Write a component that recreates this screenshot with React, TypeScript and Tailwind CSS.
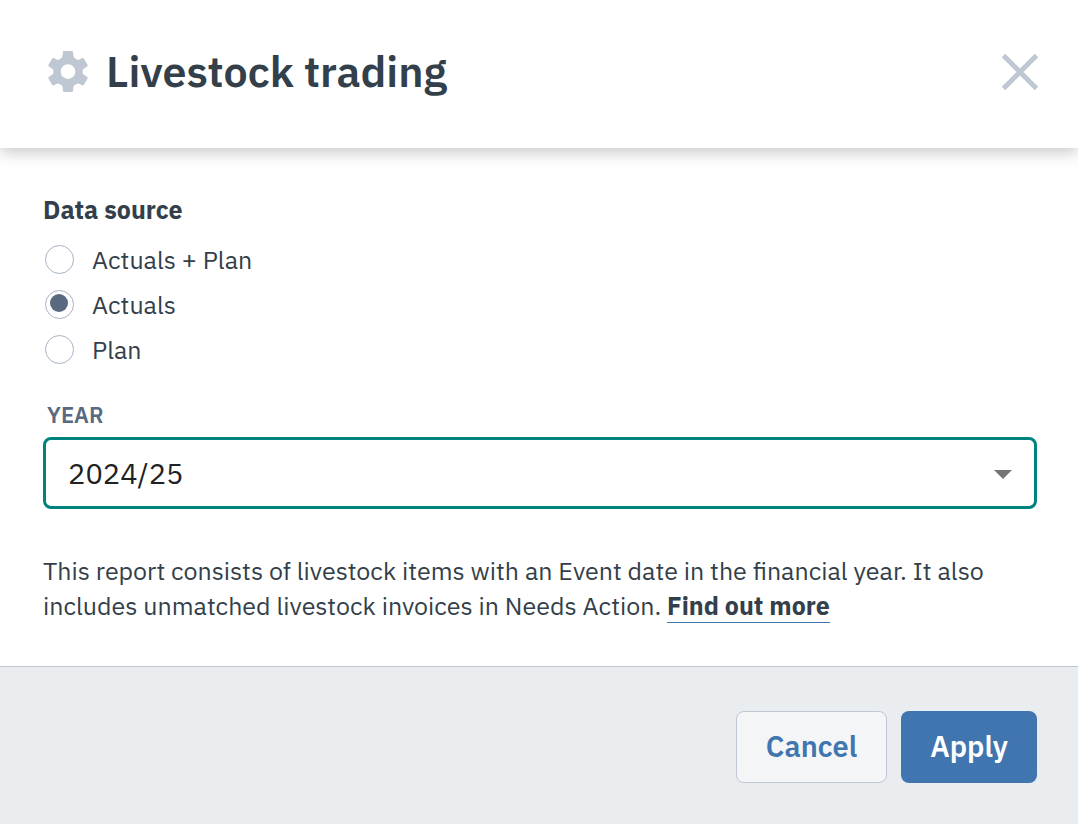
import { useState } from "react";

const sources = ["Actuals + Plan", "Actuals", "Plan"];

function GearIcon() {
  return (
    <svg viewBox="0 0 120 123" className="h-[41px] w-10 shrink-0" fill="#bfc7d3" aria-hidden="true">
      <path
        fillRule="evenodd"
        d="M48 0H72Q74 0 75 3L77 17Q77 20 80 21L88 26Q90 27 93 26L103 21Q106 20 108 23L119 42Q120 44 118 46L106 54Q104 56 104 58V66Q104 68 106 70L118 78Q120 80 119 82L108 101Q106 104 103 103L93 98Q90 96 88 98L80 102Q77 104 77 106L75 120Q74 123 72 123H48Q45 123 45 120L43 106Q43 104 40 102L32 98Q30 96 27 98L17 103Q14 104 12 101L1 82Q0 80 2 78L14 70Q16 68 16 66V58Q16 56 14 54L2 46Q0 44 1 42L12 23Q14 20 17 21L27 26Q30 27 32 26L40 21Q43 20 43 17L45 3Q45 0 48 0ZM60 40A22 22 0 1 0 60 84A22 22 0 1 0 60 40Z"
      />
    </svg>
  );
}

export default function App() {
  const [source, setSource] = useState("Actuals");
  const [year, setYear] = useState("2024/25");

  return (
    <div className="flex min-h-screen flex-col bg-white font-['IBM_Plex_Sans',Roboto,sans-serif] text-[25px] leading-[35px] text-[#333f4a]">
      <header className="flex h-[148px] items-start justify-between pt-[43px] pr-[39px] pl-12 shadow-[0_3px_16px_rgba(0,0,0,0.25)]">
        <div className="flex items-center gap-[18px]">
          <GearIcon />
          <h1 className="text-[43px] leading-[56px] font-semibold">Livestock trading</h1>
        </div>
        <button type="button" aria-label="Close" className="mt-[10px] text-[#bfc7d3]">
          <svg viewBox="0 0 38 38" className="size-[38px]" fill="none" stroke="currentColor" strokeWidth="5">
            <path d="M2.5 2.5L35.5 35.5M35.5 2.5L2.5 35.5" />
          </svg>
        </button>
      </header>

      <main className="flex-1 px-[43px] pt-11">
        <fieldset>
          <legend className="font-bold">Data source</legend>
          <div className="flex flex-col gap-[10px] pt-[15px]">
            {sources.map((name) => (
              <label key={name} className="flex items-center gap-[18px]">
                <input
                  type="radio"
                  name="source"
                  checked={source === name}
                  onChange={() => setSource(name)}
                  className="ml-0.5 flex size-[29px] shrink-0 appearance-none justify-center rounded-full border border-[#a9b4c4] pt-[3px] pr-px checked:before:size-[18px] checked:before:rounded-full checked:before:bg-[#586980]"
                />
                {name}
              </label>
            ))}
          </div>
        </fieldset>

        <label htmlFor="year" className="mt-[34px] block pl-1 text-[22px] leading-[28px] font-semibold text-[#586980]">
          YEAR
        </label>
        <div className="mt-2 -mr-0.5 grid items-center">
          <select
            id="year"
            value={year}
            onChange={(e) => setYear(e.target.value)}
            className="col-start-1 row-start-1 h-[72px] w-full appearance-none rounded-lg border-3 border-[#00827f] bg-white px-[22px] text-[29px] text-[#212121] outline-none"
          >
            <option>2024/25</option>
            <option>2023/24</option>
          </select>
          <svg viewBox="0 0 18 9" className="pointer-events-none col-start-1 row-start-1 mt-0.5 mr-[25px] h-[9px] w-[18px] justify-self-end" fill="#757575">
            <path d="M0 0H18L9 9Z" />
          </svg>
        </div>

        <p className="mt-11 mb-[42px]">
          This report consists of livestock items with an Event date in the financial year. It also includes unmatched livestock invoices in Needs Action.{" "}
          <a href="#more" className="inline-block border-b border-[#4075af] leading-[32px] font-bold">
            Find out more
          </a>
        </p>
      </main>

      <footer className="flex h-[158px] items-start justify-end gap-[14px] border-t border-[#bfc7d3] bg-[#e9edf0] pt-11 pr-[41px] text-[29px] font-semibold">
        <button type="button" className="h-[72px] rounded-lg border border-[#bfc7d3] bg-[#f4f5f7] px-[29px] pb-px text-[#4075af]">
          Cancel
        </button>
        <button type="button" className="h-[72px] rounded-lg bg-[#4075af] px-[29px] pb-px text-white">
          Apply
        </button>
      </footer>
    </div>
  );
}
